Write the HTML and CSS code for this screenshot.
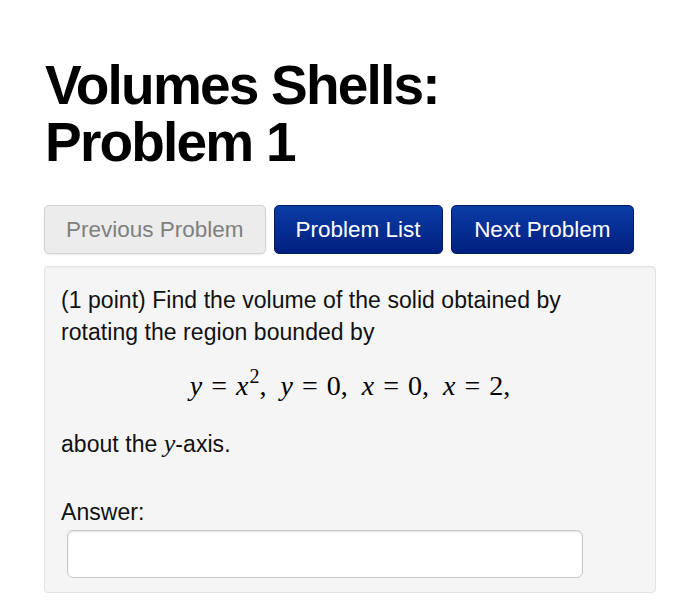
FILE: index.html
```html
<!DOCTYPE html>
<html>
<head>
<meta charset="utf-8">
<link rel="stylesheet" href="styles.css">
</head>
<body>
<div class="page">
  <h1 class="title">Volumes Shells:<br>Problem 1</h1>
  <div class="nav">
    <span class="btn btn-disabled">Previous Problem</span>
    <span class="btn btn-primary">Problem List</span>
    <span class="btn btn-primary btn-next">Next Problem</span>
  </div>
  <div class="well">
    <div class="para">(1 point) Find the volume of the solid obtained by rotating the region bounded by</div>
    <div class="math"><i>y</i><span class="op">=</span><i>x</i><sup>2</sup>,<span class="sp"></span><i>y</i><span class="op">=</span>0,<span class="sp"></span><i>x</i><span class="op">=</span>0,<span class="sp"></span><i>x</i><span class="op">=</span>2,</div>
    <div class="para">about the <i class="mi">y</i>-axis.</div>
    <div class="answer-label">Answer:</div>
    <div class="answer-box"></div>
  </div>
</div>
</body>
</html>
```

FILE: styles.css
```css
html, body {
  margin: 0;
  padding: 0;
  background: #ffffff;
}
.page {
  padding: 0 44px;
  font-family: "Liberation Sans", Arial, sans-serif;
  color: #111;
}
.title {
  margin: 57px 0 0 1px;
  font-size: 55px;
  line-height: 57px;
  font-weight: bold;
  letter-spacing: -1.8px;
  color: #000;
}
.nav {
  display: flex;
  gap: 8px;
  margin-top: 34px;
}
.btn {
  display: flex;
  align-items: center;
  justify-content: center;
  height: 46px;
  padding: 1px 21px 0 21px;
  border-radius: 5px;
  font-size: 22.5px;
}
.btn-disabled {
  background: #ececec;
  border: 1px solid #d2d2d2;
  color: #7f7f7f;
  box-shadow: 0 1px 2px rgba(0,0,0,0.08);
}
.btn-primary {
  background: linear-gradient(#0b3ca6, #001f7e);
  border: 1px solid #001a66;
  color: #ffffff;
}
.btn-next {
  padding: 1px 22.5px 0 22.5px;
}
.well {
  margin-top: 12px;
  background: #f5f5f5;
  border: 1px solid #e3e3e3;
  border-radius: 4px;
  padding: 17px 16px 14px 16px;
  box-shadow: inset 0 1px 1px rgba(0,0,0,0.04);
  font-size: 23px;
  line-height: 32px;
  letter-spacing: 0.05px;
  color: #111;
}
.math {
  margin: 22px 0 26px 0;
  text-align: center;
  font-family: "Liberation Serif", "Times New Roman", serif;
  font-size: 28px;
  line-height: 32px;
  letter-spacing: 0;
  color: #000;
}
.math i {
  font-style: italic;
}
.math sup {
  font-size: 20px;
  line-height: 0;
  vertical-align: 12px;
  margin-left: 1px;
}
.op {
  margin: 0 9px;
}
.sp {
  display: inline-block;
  width: 14px;
}
.mi {
  font-family: "Liberation Serif", "Times New Roman", serif;
  font-size: 26px;
  letter-spacing: 0;
}
.answer-label {
  margin-top: 36px;
}
.answer-box {
  margin-top: 2px;
  margin-left: 6px;
  width: 514px;
  height: 46px;
  background: #ffffff;
  border: 1px solid #c8c8c8;
  border-radius: 6px;
  box-shadow: inset 0 1px 2px rgba(0,0,0,0.12);
}
```
